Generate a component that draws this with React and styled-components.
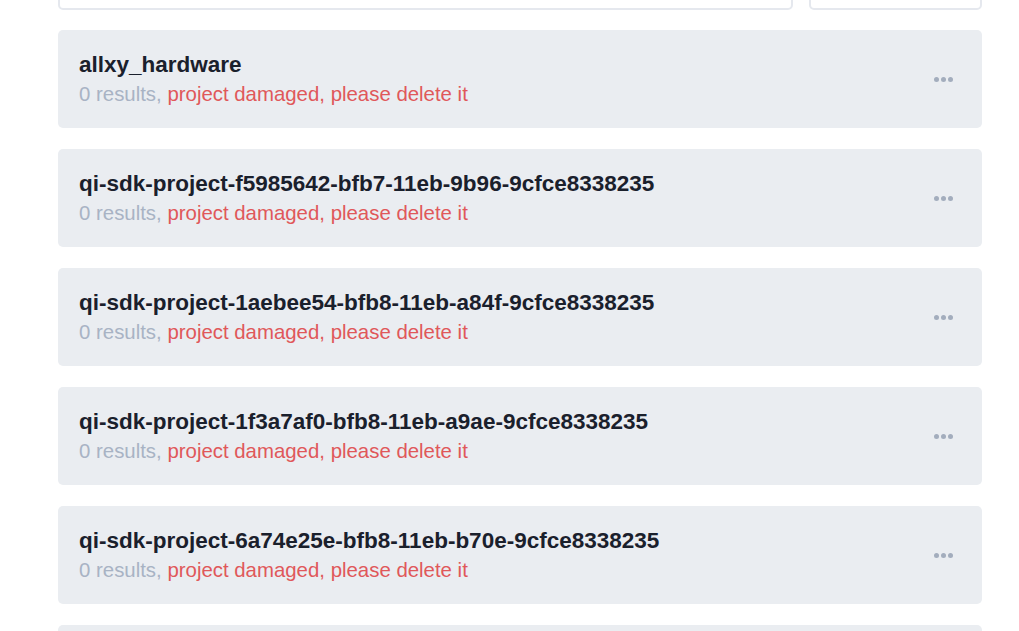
import React from "react";
import styled, { createGlobalStyle } from "styled-components";

const projects = [
  "allxy_hardware",
  "qi-sdk-project-f5985642-bfb7-11eb-9b96-9cfce8338235",
  "qi-sdk-project-1aebee54-bfb8-11eb-a84f-9cfce8338235",
  "qi-sdk-project-1f3a7af0-bfb8-11eb-a9ae-9cfce8338235",
  "qi-sdk-project-6a74e25e-bfb8-11eb-b70e-9cfce8338235",
  "qi-sdk-project-9d1f03c2-bfb8-11eb-8f3a-9cfce8338235",
];

const GlobalStyle = createGlobalStyle`
  html, body {
    margin: 0;
    padding: 0;
    background: #ffffff;
    overflow: hidden;
  }
  body {
    font-family: "Liberation Sans", Arial, sans-serif;
  }
`;

const App = () => {
  return (
    <>
      <GlobalStyle />
      <Page>
        <Toolbar>
          <SearchInput />
          <SortInput />
        </Toolbar>
        <List>
          {projects.map((name) => (
            <Card key={name}>
              <Info>
                <Title>{name}</Title>
                <Subtitle>
                  0 results, <Damaged>project damaged, please delete it</Damaged>
                </Subtitle>
              </Info>
              <MoreButton aria-label="More">
                <Dot />
                <Dot />
                <Dot />
              </MoreButton>
            </Card>
          ))}
        </List>
      </Page>
    </>
  );
};

const Page = styled.div`
  padding: 0 37px 0 58px;
`;

const Toolbar = styled.div`
  display: flex;
  gap: 16px;
  margin-top: -32px;
  margin-bottom: 20px;
`;

const SearchInput = styled.div`
  flex: 1;
  height: 38px;
  border: 2px solid #e5e8ee;
  border-radius: 5px;
  background: #fff;
`;

const SortInput = styled(SearchInput)`
  flex: 0 0 169px;
`;

const List = styled.div`
  display: flex;
  flex-direction: column;
  gap: 21px;
`;

const Card = styled.div`
  display: flex;
  align-items: center;
  justify-content: space-between;
  height: 98px;
  box-sizing: border-box;
  padding: 0 29px 0 21px;
  background: #eaedf1;
  border-radius: 5px;
`;

const Info = styled.div`
  display: flex;
  flex-direction: column;
`;

const Title = styled.div`
  font-size: 22.5px;
  font-weight: 700;
  color: #1a202c;
  line-height: 29px;
`;

const Subtitle = styled.div`
  font-size: 20.4px;
  color: #a8b3c4;
  line-height: 29px;
  margin-top: 1px;
`;

const Damaged = styled.span`
  color: #e0585a;
`;

const MoreButton = styled.button`
  display: flex;
  gap: 2px;
  padding: 0;
  border: none;
  background: transparent;
  cursor: pointer;
`;

const Dot = styled.span`
  width: 5px;
  height: 5px;
  border-radius: 50%;
  background: #a3adbd;
`;

export default App;
